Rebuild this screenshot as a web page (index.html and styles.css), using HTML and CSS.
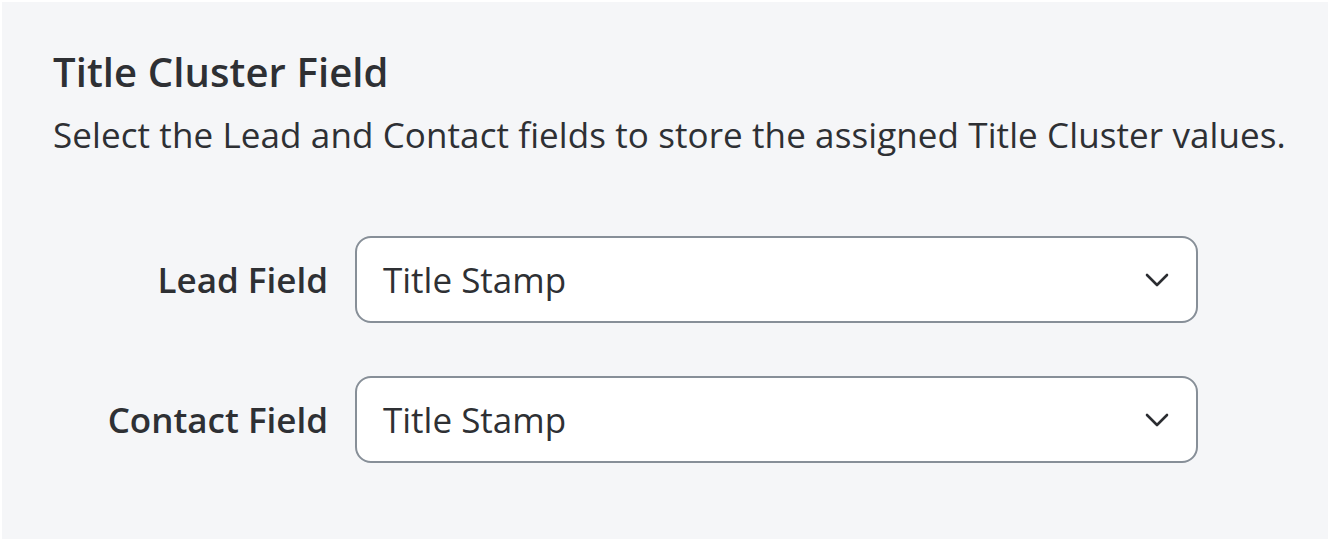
FILE: index.html
```html
<!DOCTYPE html>
<html lang="en">
<head>
    <meta charset="UTF-8">
    <meta name="viewport" content="width=device-width, initial-scale=1.0">
    <title>Title Cluster Field</title>
    <link rel="stylesheet" href="styles.css">
</head>
<body>
    <div class="panel">
        <h1>Title Cluster Field</h1>
        <p class="desc">Select the Lead and Contact fields to store the assigned Title Cluster values.</p>

        <div class="field-grid">
            <label class="field-label" for="leadField">Lead Field</label>
            <div class="select-box" id="leadField">
                <span>Title Stamp</span>
                <svg class="chevron" width="24" height="14" viewBox="0 0 24 14">
                    <path d="M2 2 L12 12 L22 2" fill="none" stroke="#2b2d31" stroke-width="2.6" stroke-linecap="round" stroke-linejoin="round"/>
                </svg>
            </div>

            <label class="field-label" for="contactField">Contact Field</label>
            <div class="select-box" id="contactField">
                <span>Title Stamp</span>
                <svg class="chevron" width="24" height="14" viewBox="0 0 24 14">
                    <path d="M2 2 L12 12 L22 2" fill="none" stroke="#2b2d31" stroke-width="2.6" stroke-linecap="round" stroke-linejoin="round"/>
                </svg>
            </div>
        </div>
    </div>
</body>
</html>
```

FILE: styles.css
```css
body {
    margin: 0;
    background-color: #ffffff;
    font-family: 'Open Sans', 'Noto Sans', sans-serif;
    color: #2e3034;
}
.panel {
    margin: 2px 0 0 2px;
    height: 537px;
    box-sizing: border-box;
    padding: 44px 0 0 51px;
    background-color: #f5f6f8;
}
h1 {
    margin: 0;
    font-size: 40px;
    font-weight: 600;
    line-height: 52px;
    letter-spacing: 0.1px;
}
.desc {
    margin: 13px 0 0 0;
    font-size: 35px;
    line-height: 48px;
    letter-spacing: 0.1px;
}
.field-grid {
    display: grid;
    grid-template-columns: 275px 843px;
    column-gap: 27px;
    row-gap: 53px;
    align-items: center;
    margin-top: 77px;
}
.field-label {
    text-align: right;
    font-size: 35px;
    font-weight: 600;
}
.select-box {
    display: flex;
    align-items: center;
    justify-content: space-between;
    height: 87px;
    box-sizing: border-box;
    padding: 0 27px 0 26px;
    background-color: #ffffff;
    border: 2px solid #878f98;
    border-radius: 16px;
    font-size: 35px;
}
.chevron {
    display: block;
}
```
